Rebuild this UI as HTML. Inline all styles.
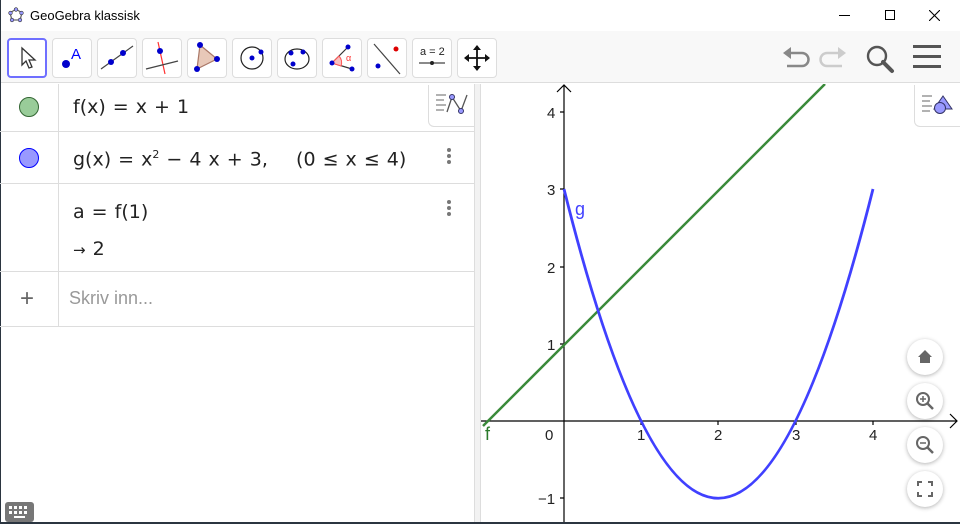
<!DOCTYPE html>
<html><head><meta charset="utf-8"><style>
*{margin:0;padding:0;box-sizing:border-box}
body{width:960px;height:524px;overflow:hidden;background:#fff;font-family:"Liberation Sans",sans-serif;position:relative}
.abs{position:absolute}
.tb{position:absolute;top:38px;width:40px;height:40px;border:1px solid #ddd;border-radius:4px;background:#fff}
.row{position:absolute;left:0;width:474px;border-bottom:1px solid #ddd}
.math{position:absolute;left:73px;font-size:19px;color:#222;font-family:"DejaVu Sans","Liberation Sans",sans-serif;letter-spacing:0;word-spacing:1px;white-space:nowrap}
.dots{position:absolute;left:447px;width:4px}
.dots i{display:block;width:4px;height:4px;border-radius:2px;background:#777;margin-bottom:2px}
.fab{position:absolute;left:907px;width:36px;height:36px;border-radius:18px;background:#fff;box-shadow:0 1px 4px rgba(0,0,0,.3)}
</style></head><body>
<div class="abs" style="left:0;top:0;width:1px;height:524px;background:#2b3540"></div>
<svg class="abs" style="left:8px;top:7px" width="16" height="16"><polygon points="8,2 14,6 12,13 4,13 2,6" fill="none" stroke="#666" stroke-width="1.3"/><g fill="#99f" stroke="#333" stroke-width=".6"><circle cx="8" cy="2.5" r="1.8"/><circle cx="13.5" cy="6" r="1.8"/><circle cx="12" cy="13" r="1.8"/><circle cx="4" cy="13" r="1.8"/><circle cx="2.5" cy="6" r="1.8"/></g></svg>
<div class="abs" style="left:30px;top:8px;font-size:13px;color:#000">GeoGebra klassisk</div>
<div class="abs" style="left:839px;top:15px;width:11px;height:1px;background:#000"></div>
<div class="abs" style="left:885px;top:10px;width:10px;height:10px;border:1px solid #000"></div>
<svg class="abs" style="left:929px;top:10px" width="11" height="11"><path d="M0 0L11 11M11 0L0 11" stroke="#000" stroke-width="1.1"/></svg>
<div class="abs" style="left:1px;top:31px;width:959px;height:52px;background:#f8f8f8;border-bottom:1px solid #ddd"></div>
<div class="tb" style="left:7px;border:2px solid #6f6fff"><svg width="36" height="36"><path d="M13 8L13 25L17 21L20 28L23 27L20 20L26 20Z" fill="#fff" stroke="#333" stroke-width="1.3"/></svg></div>
<div class="tb" style="left:52px"><svg width="40" height="40"><circle cx="13" cy="25" r="4" fill="#00c"/><text x="18" y="20" font-size="15" fill="#00f" font-family="Liberation Sans">A</text></svg></div>
<div class="tb" style="left:97px"><svg width="40" height="40"><path d="M3 30L35 7" stroke="#444" stroke-width="1.2"/><circle cx="13" cy="23" r="3" fill="#00c"/><circle cx="25" cy="14" r="3" fill="#00c"/></svg></div>
<div class="tb" style="left:142px"><svg width="40" height="40"><path d="M15 3L22 35" stroke="#f33" stroke-width="1.2"/><path d="M3 30L35 22" stroke="#444" stroke-width="1.2"/><circle cx="17" cy="12" r="3" fill="#00c"/></svg></div>
<div class="tb" style="left:187px"><svg width="40" height="40"><polygon points="12,6 29,20 9,30" fill="#e8c8b8" stroke="#a76" stroke-width="1.2"/><circle cx="12" cy="6" r="3" fill="#00c"/><circle cx="29" cy="20" r="3" fill="#00c"/><circle cx="9" cy="30" r="3" fill="#00c"/></svg></div>
<div class="tb" style="left:232px"><svg width="40" height="40"><circle cx="19" cy="19" r="11" fill="none" stroke="#222" stroke-width="1.2"/><circle cx="19" cy="19" r="2.5" fill="#00c"/><circle cx="28" cy="13" r="2.5" fill="#00c"/></svg></div>
<div class="tb" style="left:277px"><svg width="40" height="40"><ellipse cx="19" cy="20" rx="12" ry="10" fill="none" stroke="#222" stroke-width="1.2"/><circle cx="13" cy="14" r="2.5" fill="#00c"/><circle cx="25" cy="13" r="2.5" fill="#00c"/><circle cx="15" cy="25" r="2.5" fill="#00c"/></svg></div>
<div class="tb" style="left:322px"><svg width="40" height="40"><path d="M25 8L9 24L29 30" fill="none" stroke="#333" stroke-width="1.2"/><path d="M9 24L16 17A10 10 0 0 1 18 27Z" fill="#f9c0c0" stroke="#f55"/><text x="23" y="22" font-size="9" fill="#f33">α</text><circle cx="25" cy="8" r="2.5" fill="#00c"/><circle cx="9" cy="24" r="2.5" fill="#00c"/><circle cx="29" cy="30" r="2.5" fill="#00c"/></svg></div>
<div class="tb" style="left:367px"><svg width="40" height="40"><path d="M6 5L32 35" stroke="#444" stroke-width="1.2"/><circle cx="28" cy="10" r="2.5" fill="#d00"/><circle cx="10" cy="27" r="2.5" fill="#00c"/></svg></div>
<div class="tb" style="left:412px"><svg width="40" height="40"><text x="7" y="16" font-size="11" fill="#222" font-family="Liberation Sans">a = 2</text><path d="M6 24L32 24" stroke="#444" stroke-width="1.2"/><circle cx="19" cy="24" r="2" fill="#222"/></svg></div>
<div class="tb" style="left:457px"><svg width="40" height="40"><path d="M19 7V31M7 19H31" stroke="#111" stroke-width="1.8"/><path d="M19 6l-4 5h8zM19 32l-4-5h8zM6 19l5-4v8zM32 19l-5-4v8z" fill="#111"/></svg></div>
<svg class="abs" style="left:782px;top:44px" width="30" height="28"><path d="M6 9H20A6 6 0 0 1 20 22H5" fill="none" stroke="#888" stroke-width="2.5"/><path d="M1 9L9 3V15Z" fill="#888"/></svg>
<svg class="abs" style="left:817px;top:44px" width="30" height="28"><path d="M24 9H10A6 6 0 0 0 10 22H25" fill="none" stroke="#ccc" stroke-width="2.5"/><path d="M29 9L21 3V15Z" fill="#ccc"/></svg>
<svg class="abs" style="left:864px;top:43px" width="32" height="32"><circle cx="13" cy="13" r="9" fill="none" stroke="#555" stroke-width="2.4"/><path d="M19 19L28 28" stroke="#555" stroke-width="4" stroke-linecap="round"/></svg>
<div class="abs" style="left:913px;top:45px;width:28px;height:3px;background:#555;box-shadow:0 10px 0 #555,0 20px 0 #555"></div>
<div class="row" style="top:84px;height:48px"></div>
<div class="row" style="top:132px;height:52px"></div>
<div class="row" style="top:184px;height:88px"></div>
<div class="row" style="top:272px;height:55px"></div>
<div class="abs" style="left:58px;top:84px;width:1px;height:243px;background:#ddd"></div>
<div class="abs" style="left:19px;top:97px;width:20px;height:20px;border-radius:10px;background:#9c9;border:1px solid #363"></div>
<div class="abs" style="left:19px;top:148px;width:20px;height:20px;border-radius:10px;background:#99f;border:1px solid #00f"></div>
<div class="math" style="top:96px">f(x) = x + 1</div>
<div class="math" style="top:148px">g(x) = x<sup style="font-size:11px">2</sup> − 4 x + 3,&nbsp;&nbsp;&nbsp; (0 ≤ x ≤ 4)</div>
<div class="math" style="top:201px">a = f(1)</div>
<div class="math" style="top:238px"><span style="font-size:15px">→</span> 2</div>
<div class="dots" style="top:148px"><i></i><i></i><i></i></div>
<div class="dots" style="top:200px"><i></i><i></i><i></i></div>
<div class="abs" style="left:20px;top:285px;font-size:24px;color:#666;font-weight:300">+</div>
<div class="abs" style="left:69px;top:288px;font-size:18px;color:#999">Skriv inn...</div>
<div class="abs" style="left:428px;top:85px;width:46px;height:42px;background:#fff;border:1px solid #ddd;border-top:none;border-right:none;border-radius:0 0 0 6px"><svg width="46" height="40"><path d="M7 10H17M7 15H15M7 20H17M7 25H15" stroke="#999" stroke-width="1.5"/><path d="M18 27L23 12L32 26L38 10" fill="none" stroke="#555" stroke-width="1.3"/><circle cx="23" cy="12" r="2.5" fill="#99f" stroke="#336"/><circle cx="32" cy="26" r="2.5" fill="#99f" stroke="#336"/></svg></div>
<div class="abs" style="left:5px;top:502px;width:29px;height:20px;border-radius:3px;background:#777"><svg width="29" height="20"><g fill="#fff"><rect x="4" y="4" width="3" height="3"/><rect x="9" y="4" width="3" height="3"/><rect x="14" y="4" width="3" height="3"/><rect x="19" y="4" width="3" height="3"/><rect x="4" y="9" width="3" height="3"/><rect x="9" y="9" width="3" height="3"/><rect x="14" y="9" width="3" height="3"/><rect x="19" y="9" width="3" height="3"/><rect x="9" y="14" width="11" height="2"/></g></svg></div>
<div class="abs" style="left:474px;top:84px;width:7px;height:440px;background:#f2f2f2;border-left:1px solid #ddd;border-right:1px solid #ddd"></div>
<svg class="abs" style="left:481px;top:84px" width="479" height="440" viewBox="481 84 479 440">
<defs><clipPath id="c"><rect x="481" y="84" width="479" height="440"/></clipPath></defs>
<g stroke="#000" stroke-width="1.2" fill="none">
<path d="M564 524V85M557 92L564 85L571 92"/>
<path d="M481 421H957M950 414L957 421L950 428"/>
<path d="M641 421v4M718 421v4M796 421v4M873 421v4M560 112h4M560 189h4M560 267h4M560 344h4M560 498h4"/>
</g>
<g font-size="15" fill="#222" font-family="Liberation Sans">
<text x="545" y="440">0</text><text x="637" y="440">1</text><text x="714" y="440">2</text><text x="792" y="440">3</text><text x="869" y="440">4</text>
<text x="547" y="118">4</text><text x="547" y="195">3</text><text x="547" y="273">2</text><text x="547" y="350">1</text><text x="538" y="504">−1</text>
</g>
<g clip-path="url(#c)">
<path d="M483 426L825 84" stroke="#3a8a3a" stroke-width="2.5"/>
<path d="M564 189Q718 807.5 873 189" fill="none" stroke="#4040ff" stroke-width="2.8"/>
</g>
<text x="485" y="440" font-size="18" fill="#2a7a2a" font-family="Liberation Sans">f</text>
<text x="575" y="215" font-size="18" fill="#4040ff" font-family="Liberation Sans">g</text>
</svg>
<div class="abs" style="left:914px;top:85px;width:46px;height:42px;background:#fff;border:1px solid #ddd;border-top:none;border-right:none;border-radius:0 0 0 6px"><svg width="46" height="40"><path d="M7 11H17M7 16H15M7 21H17M7 26H15" stroke="#999" stroke-width="1.5"/><polygon points="28,11 37,24 19,24" fill="#99f" stroke="#336"/><circle cx="25" cy="23" r="5.5" fill="#99f" stroke="#336"/></svg></div>
<div class="fab" style="top:339px"><svg width="36" height="36"><path d="M11 18L18 11L25 18H23V24H13V18Z" fill="#666"/></svg></div>
<div class="fab" style="top:383px"><svg width="36" height="36"><circle cx="16" cy="16" r="6" fill="none" stroke="#666" stroke-width="2"/><path d="M20 20L26 26" stroke="#666" stroke-width="2.5"/><path d="M13 16H19M16 13V19" stroke="#666" stroke-width="1.5"/></svg></div>
<div class="fab" style="top:427px"><svg width="36" height="36"><circle cx="16" cy="16" r="6" fill="none" stroke="#666" stroke-width="2"/><path d="M20 20L26 26" stroke="#666" stroke-width="2.5"/><path d="M13 16H19" stroke="#666" stroke-width="1.5"/></svg></div>
<div class="fab" style="top:471px"><svg width="36" height="36"><path d="M11 15V11H15M21 11H25V15M25 21V25H21M15 25H11V21" fill="none" stroke="#666" stroke-width="2"/></svg></div>
<div class="abs" style="left:0;top:522px;width:960px;height:2px;background:#2b3540"></div>
</body></html>
